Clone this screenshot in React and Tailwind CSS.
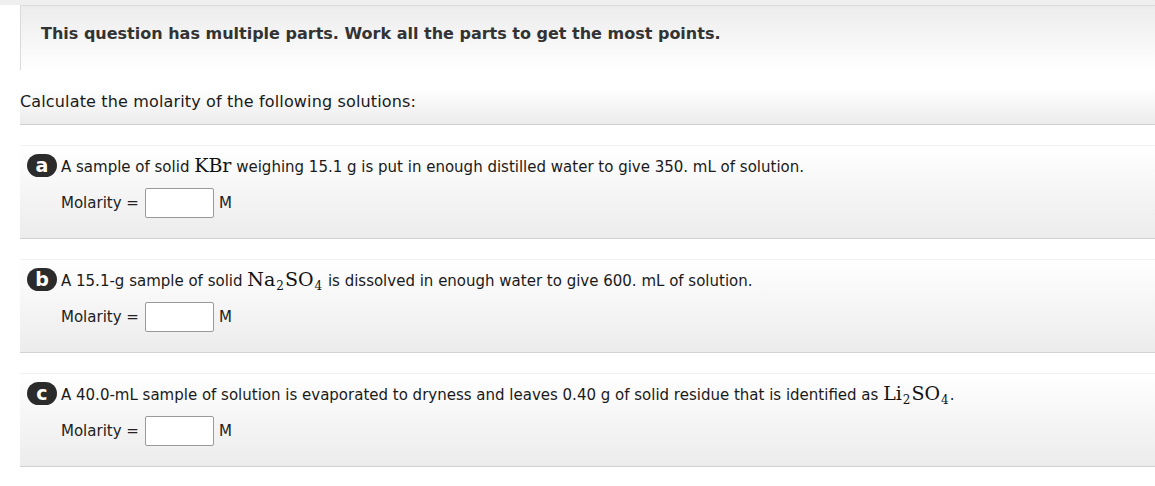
import React from 'react';

const Chem = ({ children }) => (
	<span className="text-[19px] text-[#111]" style={{ fontFamily: '"DejaVu Serif", "Liberation Serif", serif' }}>{children}</span>
);

const Sub = ({ children }) => <span className="text-[12px] relative top-[4px] mx-[1px]">{children}</span>;

const Badge = ({ letter }) => (
	<span className="inline-flex items-center justify-center w-[30px] h-[23px] rounded-full bg-[#2b2b2b] text-white font-bold text-[19px] leading-none mr-[4px] shrink-0">
		{letter}
	</span>
);

const Part = ({ letter, children }) => (
	<div className="mt-[20px] ml-[20px] h-[94px] border-t border-[#f2f2f2] border-b border-b-[#d2d2d2] bg-gradient-to-b from-white to-[#ececec] pl-[7px] pt-[8px]">
		<div className="flex items-center h-[23px]">
			<Badge letter={letter} />
			<span className="text-[15px] text-[#1a1a1a]">{children}</span>
		</div>
		<div className="flex items-center mt-[11px] pl-[34px]">
			<span className="text-[15px] text-[#222] mr-[6px]">Molarity =</span>
			<input type="text" className="w-[69px] h-[30px] border border-[#9a9a9a] rounded-[2px] bg-white" />
			<span className="text-[15px] text-[#222] ml-[5px]">M</span>
		</div>
	</div>
);

export default function App() {
	return (
		<div className="w-[1155px] h-[486px] bg-white overflow-hidden" style={{ fontFamily: '"DejaVu Sans", Verdana, sans-serif' }}>
			<div className="h-[5px] bg-[#efefef]"></div>
			<div className="ml-[20px] h-[65px] border-t border-l border-[#dadada] bg-gradient-to-b from-[#ececec] to-white pl-[20px] pt-[16px]">
				<p className="text-[16px] font-bold text-[#333]">This question has multiple parts. Work all the parts to get the most points.</p>
			</div>
			<div className="mt-[18px] ml-[20px] h-[37px] border-b border-[#d0d0d0] bg-gradient-to-b from-white to-[#ececec] pt-[2px]">
				<p className="text-[16px] tracking-[0.15px] text-[#1a1a1a]">Calculate the molarity of the following solutions:</p>
			</div>

			<Part letter="a">
				A sample of solid <Chem>KBr</Chem> weighing 15.1 g is put in enough distilled water to give 350. mL of solution.
			</Part>
			<Part letter="b">
				A 15.1-g sample of solid <Chem>Na<Sub>2</Sub>SO<Sub>4</Sub></Chem> is dissolved in enough water to give 600. mL of solution.
			</Part>
			<Part letter="c">
				A 40.0-mL sample of solution is evaporated to dryness and leaves 0.40 g of solid residue that is identified as <Chem>Li<Sub>2</Sub>SO<Sub>4</Sub></Chem>.
			</Part>
		</div>
	);
}
